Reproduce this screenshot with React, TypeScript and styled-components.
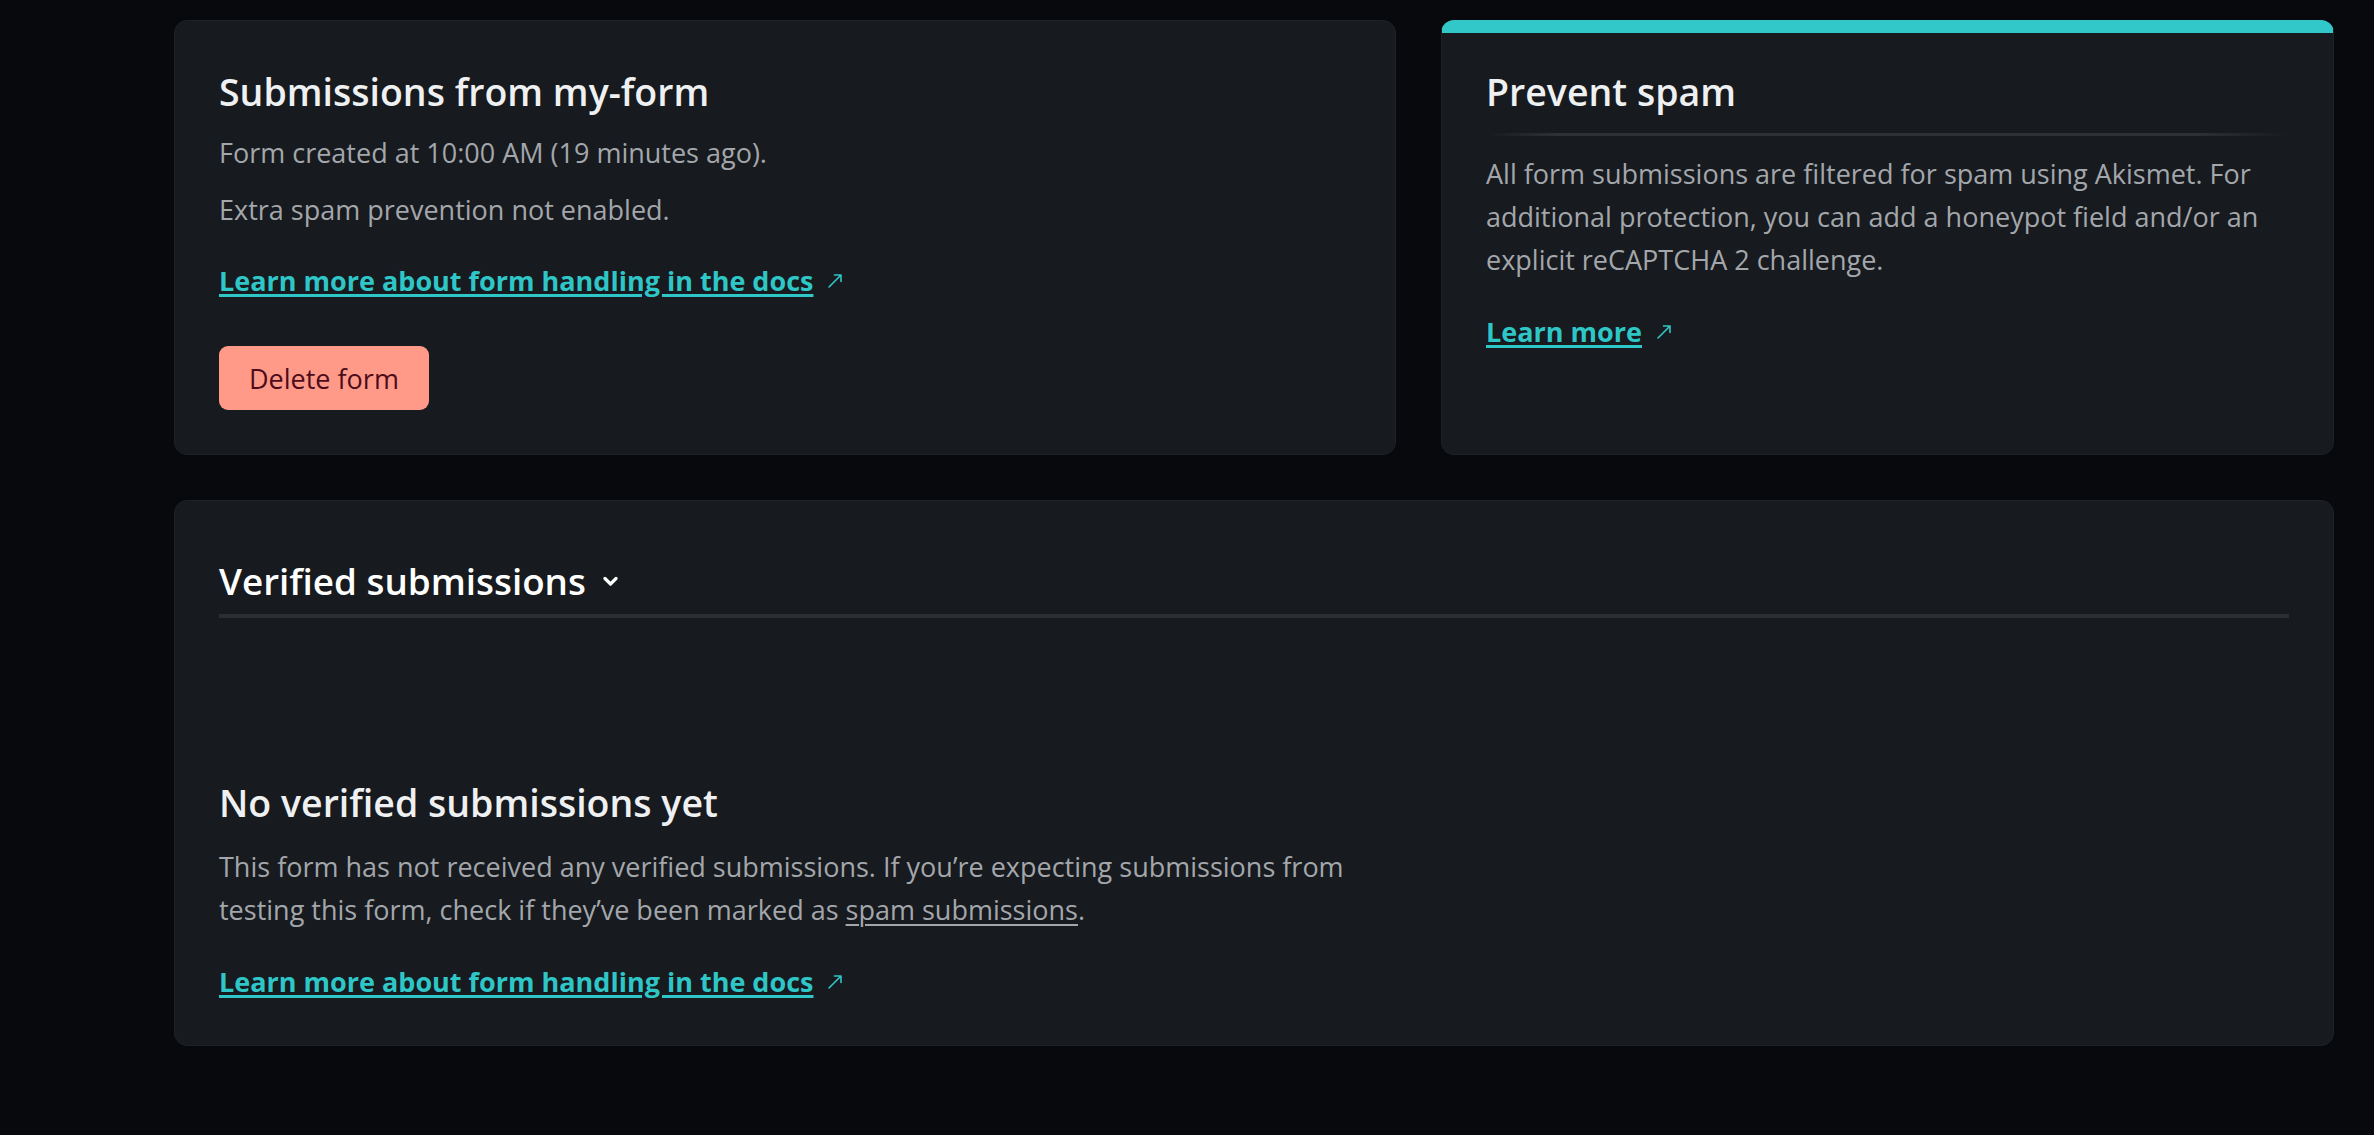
import React from "react";
import styled, { createGlobalStyle, css } from "styled-components";

const GlobalStyle = createGlobalStyle`
  html, body {
    margin: 0;
    padding: 0;
    background: #07090c;
  }
  body {
    font-family: "Open Sans", "Noto Sans", sans-serif;
    color: #a3a7ac;
  }
  * { box-sizing: border-box; }
`;

const Page = styled.main`
  min-height: 100vh;
  padding: 20px 40px 40px 174px;
`;

const Stack = styled.div`
  width: 2160px;
  display: grid;
  gap: 45px;
`;

const TopRow = styled.div`
  display: grid;
  grid-template-columns: 1222px 1fr;
  gap: 45px;
`;

const Card = styled.section<{ $accent?: boolean; $bottom?: number }>`
  background: #171a1e;
  border: 1px solid #1e2125;
  border-radius: 13px;
  padding: 44px 44px ${(p) => p.$bottom ?? 44}px;
  ${(p) =>
    p.$accent &&
    css`
      border-top: 13px solid #32c8c9;
      padding-top: 32px;
    `}
`;

const Heading = styled.h2<{ $white?: boolean }>`
  margin: 0;
  font-size: 37.5px;
  line-height: 53px;
  font-weight: 600;
  color: ${(p) => (p.$white ? "#ffffff" : "#eef0f2")};
`;

const Text = styled.p<{ $gap?: number }>`
  margin: ${(p) => p.$gap ?? 14}px 0 0;
  font-size: 27px;
  line-height: 43px;
  color: #a3a7ac;
`;

const Narrow = styled(Text)`
  max-width: 1170px;
`;

const LinkRow = styled.p<{ $gap: number }>`
  margin: ${(p) => p.$gap}px 0 0;
  font-size: 27px;
  line-height: 43px;
`;

const DocLink = styled.a`
  display: inline-flex;
  align-items: center;
  gap: 14px;
  color: #2fc6c7;
  font-weight: 700;
  text-decoration: none;
  cursor: pointer;
`;

const LinkText = styled.span`
  text-decoration: underline;
  text-decoration-thickness: 3px;
  text-underline-offset: 3px;
`;

const InlineLink = styled.a`
  color: #a3a7ac;
  text-decoration: underline;
  text-decoration-thickness: 1.5px;
  text-underline-offset: 4px;
  cursor: pointer;
`;

const DangerButton = styled.button`
  margin-top: 44px;
  height: 64px;
  padding: 0 30px;
  border: none;
  border-radius: 9px;
  background: #ff9a89;
  color: #4d0c1b;
  font-family: inherit;
  font-size: 27px;
  cursor: pointer;
  display: block;
`;

const FadeRule = styled.hr`
  margin: 15px 0 0;
  height: 3px;
  border: none;
  background: linear-gradient(
    90deg,
    rgba(46, 49, 54, 0) 0%,
    #2e3136 9%,
    #2e3136 88%,
    rgba(46, 49, 54, 0) 100%
  );
`;

const TabHeader = styled.div`
  padding: 10px 0 6px;
  border-bottom: 4px solid #2b2e33;
`;

const TabTitle = styled(Heading)`
  display: inline-flex;
  align-items: center;
  gap: 17px;
  font-size: 36.8px;
`;

const EmptyState = styled.div`
  padding-top: 158px;
`;

const ArrowIcon = () => (
  <svg width="16" height="16" viewBox="0 0 16 16" fill="none" aria-hidden="true">
    <path
      d="M2 14 L14 2 M7.5 2 H14 V8.5"
      stroke="currentColor"
      strokeWidth="1.6"
      strokeLinecap="round"
      strokeLinejoin="round"
    />
  </svg>
);

const Chevron = () => (
  <svg width="15" height="11" viewBox="0 0 15 11" fill="none" aria-hidden="true">
    <path
      d="M2 2.5 L7.5 8 L13 2.5"
      stroke="#ffffff"
      strokeWidth="3.2"
      strokeLinecap="round"
      strokeLinejoin="round"
    />
  </svg>
);

const ExternalLink = ({ children, gap }: { children: React.ReactNode; gap: number }) => (
  <LinkRow $gap={gap}>
    <DocLink>
      <LinkText>{children}</LinkText>
      <ArrowIcon />
    </DocLink>
  </LinkRow>
);

export default function App() {
  return (
    <>
      <GlobalStyle />
      <Page>
        <Stack>
          <TopRow>
            <Card>
              <Heading>Submissions from my-form</Heading>
              <Text $gap={13}>Form created at 10:00 AM (19 minutes ago).</Text>
              <Text>Extra spam prevention not enabled.</Text>
              <ExternalLink gap={28}>Learn more about form handling in the docs</ExternalLink>
              <DangerButton>Delete form</DangerButton>
            </Card>
            <Card $accent>
              <Heading>Prevent spam</Heading>
              <FadeRule />
              <Text $gap={16}>
                All form submissions are filtered for spam using Akismet. For additional
                protection, you can add a honeypot field and/or an explicit reCAPTCHA 2
                challenge.
              </Text>
              <ExternalLink gap={29}>Learn more</ExternalLink>
            </Card>
          </TopRow>
          <Card $bottom={42}>
            <TabHeader>
              <TabTitle $white>
                Verified submissions
                <Chevron />
              </TabTitle>
            </TabHeader>
            <EmptyState>
              <Heading>No verified submissions yet</Heading>
              <Narrow $gap={16}>
                This form has not received any verified submissions. If you’re expecting
                submissions from testing this form, check if they’ve been marked as{" "}
                <InlineLink>spam submissions</InlineLink>.
              </Narrow>
              <ExternalLink gap={29}>Learn more about form handling in the docs</ExternalLink>
            </EmptyState>
          </Card>
        </Stack>
      </Page>
    </>
  );
}
